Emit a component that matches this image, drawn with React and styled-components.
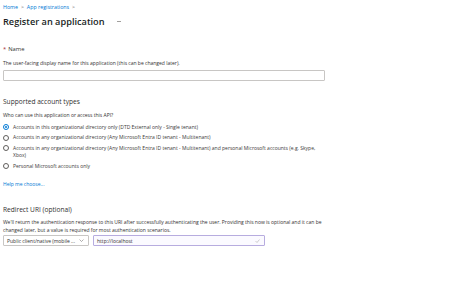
import React from "react";
import styled, { createGlobalStyle } from "styled-components";

const Global = createGlobalStyle`
  html, body { margin: 0; padding: 0; background: #fff; }
  body { font-family: "Open Sans", "Noto Sans", sans-serif; color: #323130; }
`;

const Page = styled.div`
  width: 474px;
  height: 290px;
  padding: 0 0 0 3px;
  box-sizing: border-box;
  overflow: hidden;
`;

const Crumbs = styled.div`
  display: flex;
  align-items: center;
  gap: 3px;
  height: 8px;
  margin-top: 3px;
  font-size: 5.3px;
  color: #0078d4;
`;

const Sep = styled.span`
  color: #605e5c;
  font-size: 5px;
`;

const TitleRow = styled.div`
  display: flex;
  align-items: center;
  gap: 12px;
  margin-top: 2px;
  height: 16px;
`;

const Title = styled.h1`
  margin: 0;
  font-size: 9.2px;
  font-weight: 600;
  color: #201f1e;
`;

const Dash = styled.span`
  display: block;
  width: 4px;
  height: 1px;
  background: #a19f9d;
`;

const Section = styled.div`
  margin-top: ${(p) => p.$top}px;
  width: 322px;
`;

const Label = styled.div`
  font-size: 5.8px;
  line-height: 8px;
  color: #323130;
`;

const Star = styled.span`
  color: #a4262c;
  margin-right: 2px;
`;

const Heading = styled.div`
  font-size: 6.6px;
  line-height: 9px;
  color: #323130;
`;

const Help = styled.div`
  font-size: 5px;
  line-height: 8px;
  color: #323130;
  margin-top: ${(p) => p.$top || 0}px;
`;

const TextInput = styled.div`
  margin-top: 3px;
  width: 322px;
  height: 11px;
  box-sizing: border-box;
  border: 1px solid #c8c6c4;
  border-radius: 1px;
`;

const Radios = styled.div`
  display: flex;
  flex-direction: column;
  gap: 3.7px;
  margin-top: 4.5px;
`;

const RadioRow = styled.div`
  display: flex;
  align-items: flex-start;
  gap: 4px;
  font-size: 5px;
  line-height: 7px;
  color: #3b3a39;
`;

const Circle = styled.span`
  flex: none;
  width: 6px;
  height: 6px;
  margin-top: 0.5px;
  border-radius: 50%;
  box-sizing: border-box;
  border: 0.7px solid ${(p) => (p.$on ? "#0078d4" : "#605e5c")};
  display: flex;
  align-items: center;
  justify-content: center;
  &::after {
    content: "";
    display: ${(p) => (p.$on ? "block" : "none")};
    width: 2.6px;
    height: 2.6px;
    border-radius: 50%;
    background: #0078d4;
  }
`;

const Link = styled.div`
  margin-top: 10px;
  font-size: 5px;
  line-height: 8px;
  color: #0078d4;
`;

const Controls = styled.div`
  display: flex;
  gap: 4px;
  margin-top: 1.5px;
`;

const Select = styled.div`
  width: ${(p) => p.$w}px;
  height: 11px;
  box-sizing: border-box;
  border: 1px solid ${(p) => (p.$focus ? "#b7acdf" : "#c8c6c4")};
  background: ${(p) => (p.$focus ? "#fbfaff" : "#fff")};
  border-radius: 1px;
  display: flex;
  align-items: center;
  justify-content: space-between;
  padding: 0 4px 0 3px;
  font-size: 5px;
  color: #323130;
`;

const Chevron = () => (
  <svg width="5" height="3" viewBox="0 0 10 6">
    <path d="M1 1l4 4 4-4" fill="none" stroke="#605e5c" strokeWidth="1" />
  </svg>
);

const Check = () => (
  <svg width="5" height="4" viewBox="0 0 10 8">
    <path d="M1 4l3 3 5-6" fill="none" stroke="#a19f9d" strokeWidth="1" />
  </svg>
);

const options = [
  { text: "Accounts in this organizational directory only (DTD External only - Single tenant)", on: true },
  { text: "Accounts in any organizational directory (Any Microsoft Entra ID tenant - Multitenant)" },
  {
    text:
      "Accounts in any organizational directory (Any Microsoft Entra ID tenant - Multitenant) and personal Microsoft accounts (e.g. Skype, Xbox)",
  },
  { text: "Personal Microsoft accounts only" },
];

export default function App() {
  return (
    <Page>
      <Global />
      <Crumbs>
        <span>Home</span>
        <Sep>&gt;</Sep>
        <span>App registrations</span>
        <Sep>&gt;</Sep>
      </Crumbs>
      <TitleRow>
        <Title>Register an application</Title>
        <Dash />
      </TitleRow>

      <Section $top={16}>
        <Label>
          <Star>*</Star>Name
        </Label>
        <Help $top={6}>The user-facing display name for this application (this can be changed later).</Help>
        <TextInput />
      </Section>

      <Section $top={16}>
        <Heading>Supported account types</Heading>
        <Help $top={5}>Who can use this application or access this API?</Help>
        <Radios>
          {options.map((o, i) => (
            <RadioRow key={i}>
              <Circle $on={o.on} />
              <span>{o.text}</span>
            </RadioRow>
          ))}
        </Radios>
        <Link>Help me choose...</Link>
      </Section>

      <Section $top={17}>
        <Heading>Redirect URI (optional)</Heading>
        <Help $top={4}>
          We'll return the authentication response to this URI after successfully authenticating the user. Providing
          this now is optional and it can be changed later, but a value is required for most authentication scenarios.
        </Help>
        <Controls>
          <Select $w={86}>
            <span>Public client/native (mobile ...</span>
            <Chevron />
          </Select>
          <Select $w={172} $focus>
            <span>http://localhost</span>
            <Check />
          </Select>
        </Controls>
      </Section>
    </Page>
  );
}
